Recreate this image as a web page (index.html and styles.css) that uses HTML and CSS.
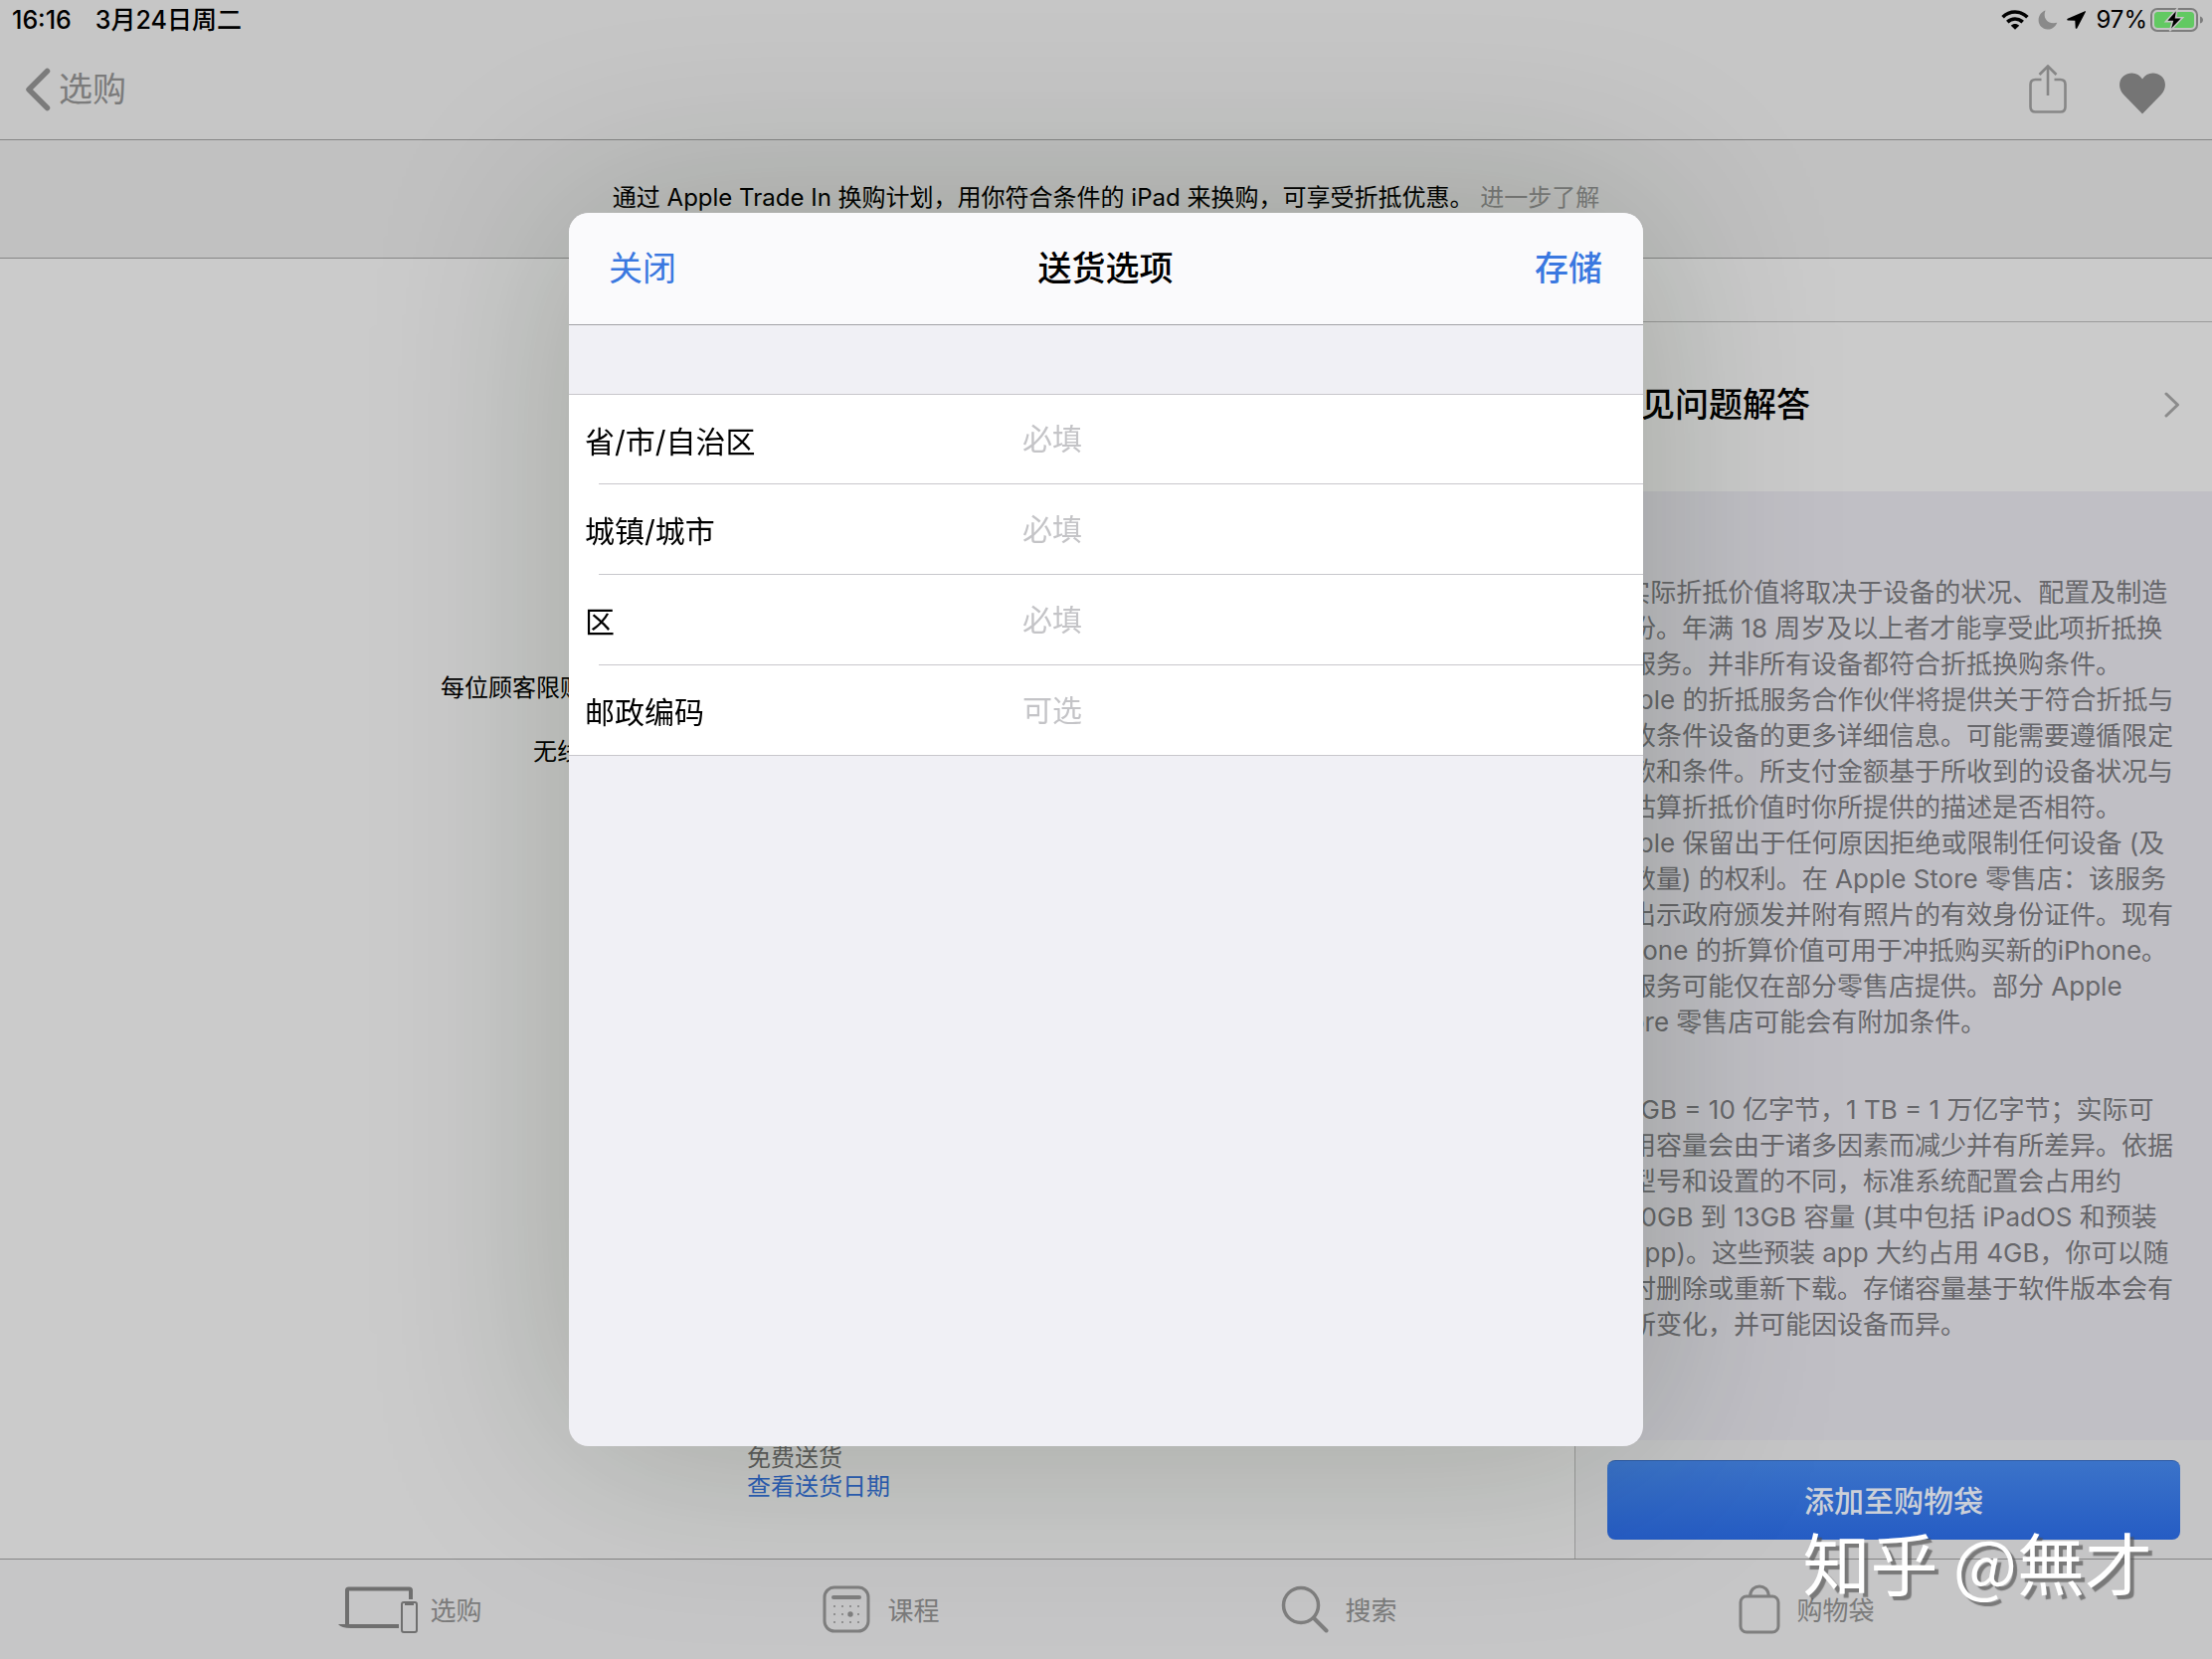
FILE: index.html
```html
<!DOCTYPE html>
<html lang="zh-CN">
<head>
<meta charset="utf-8">
<meta name="viewport" content="width=device-width, initial-scale=1">
<title>送货选项</title>
<link rel="stylesheet" href="styles.css">
</head>
<body>
<div class="page">
  <header class="top">
    <div class="status">
      <div class="status-group status-left"><span>16:16</span><span>3月24日周二</span></div>
      <div class="status-group status-right">
        <svg class="i-wifi" width="28" height="20" viewBox="0 0 28 20" fill="none" stroke="#000" stroke-width="3.6"><path d="M1.6 7.2C8.500 .3 19.500 .3 26.400 7.200"/><path d="M6.300 12.100C10.600 8 17.400 8 21.700 12.100"/><path d="M14 19.800L9.800 15.700C12 13.400 16 13.400 18.200 15.700Z" fill="#000" stroke="none"/></svg>
        <svg class="i-moon" width="20" height="20" viewBox="0 0 20 20"><path d="M7.500 .5C4.500 8 9.500 15 19.300 12.800C17 18 13 19.800 9.600 19.600C4.500 19.300 .6 15.500 .6 10.300C.6 5.500 3.600 1.800 7.500 .5Z" fill="#8a8a8a"/></svg>
        <svg class="i-loc" width="20" height="18" viewBox="0 0 20 18"><path d="M18.200 .3L.8 7.800C-.1 8.300 .1 9.300 1 9.400L8.300 9.700L8.700 17C8.800 18 10 18.200 10.400 17.300L18.900 1C19.200 .4 18.800 0 18.200 .3Z" fill="#000"/></svg>
        <span class="pct">97%</span>
        <svg class="i-bat" width="54" height="24" viewBox="0 0 54 24"><rect x="1" y="1" width="46" height="22" rx="6" fill="none" stroke="#7d7d7d" stroke-width="2"/><rect x="4" y="4" width="40" height="16" rx="3.500" fill="#62c962"/><path d="M27 .8L15.500 13.600H22.200L19.500 23.200L32.500 9.700H25.600Z" fill="#000" stroke="#c6c6c6" stroke-width="1.600"/><path d="M50 8.500C54 9.500 54 14.500 50 15.500Z" fill="#7d7d7d"/></svg>
      </div>
    </div>
    <nav class="navbar">
      <a class="back" href="#shop">
        <svg width="26" height="44" viewBox="0 0 26 44" fill="none" stroke="#7b7b7b" stroke-width="5.500" stroke-linecap="round" stroke-linejoin="round"><path d="M22.500 3.500L4 22L22.500 40.500"/></svg>
        <span>选购</span>
      </a>
      <div class="nav-actions">
        <button class="icon-btn" type="button" aria-label="共享"><svg width="38" height="50" viewBox="0 0 38 50" fill="none" stroke="#868686" stroke-width="2.600"><path d="M12.500 15H6.500Q1.500 15 1.500 20V42.500Q1.500 47.500 6.500 47.500H31.500Q36.500 47.500 36.500 42.500V20Q36.500 15 31.500 15H25.500"/><path d="M19 31V2M10.500 10L19 1.500L27.500 10"/></svg></button>
        <button class="icon-btn" type="button" aria-label="收藏"><svg width="46" height="50" viewBox="0 -8 46 50"><path d="M23 41.500L4 22C-1.500 16-1 7.500 4 3.500C10-1.500 19-.5 23 6.500C27-.5 36-1.500 42 3.500C47 7.500 47.500 16 42 22Z" fill="#757575"/></svg></button>
      </div>
    </nav>
  </header>

  <div class="banner"><p>通过 Apple Trade In 换购计划，用你符合条件的 iPad 来换购，可享受折抵优惠。 <a href="#trade-in">进一步了解</a></p></div>

  <main class="main">
    <section class="product">
      <p class="limit">每位顾客限购</p>
      <p class="wireless">无线</p>
      <div class="shipping">
        <p>免费送货</p>
        <a href="#dates">查看送货日期</a>
      </div>
    </section>
    <aside class="side">
      <div class="spacer"></div>
      <a class="faq" href="#faq">
        <span>常见问题解答</span>
        <svg width="16" height="26" viewBox="0 0 16 26" fill="none" stroke="#8b8b8b" stroke-width="3" stroke-linecap="round" stroke-linejoin="round"><path d="M2 2L13.500 13L2 24"/></svg>
      </a>
      <div class="notes">
        <p>* 实际折抵价值将取决于设备的状况、配置及制造<br>年份。年满 18 周岁及以上者才能享受此项折抵换<br>购服务。并非所有设备都符合折抵换购条件。<br>Apple 的折抵服务合作伙伴将提供关于符合折抵与<br>回收条件设备的更多详细信息。可能需要遵循限定<br>条款和条件。所支付金额基于所收到的设备状况与<br>在估算折抵价值时你所提供的描述是否相符。<br>Apple 保留出于任何原因拒绝或限制任何设备 (及<br>其数量) 的权利。在 Apple Store 零售店：该服务<br>需出示政府颁发并附有照片的有效身份证件。现有<br>iPhone 的折算价值可用于冲抵购买新的iPhone。<br>该服务可能仅在部分零售店提供。部分 Apple<br>Store 零售店可能会有附加条件。</p>
        <p class="hang">1GB = 10 亿字节，1 TB = 1 万亿字节；实际可<br>用容量会由于诸多因素而减少并有所差异。依据<br>型号和设置的不同，标准系统配置会占用约<br>10GB 到 13GB 容量 (其中包括 iPadOS 和预装<br>app)。这些预装 app 大约占用 4GB，你可以随<br>时删除或重新下载。存储容量基于软件版本会有<br>所变化，并可能因设备而异。</p>
      </div>
      <div class="buybar"><button class="buy" type="button">添加至购物袋</button></div>
    </aside>
  </main>

  <nav class="tabs">
    <a class="tab tab-shop" href="#shop"><svg width="81" height="48" viewBox="0 0 81 48" fill="none" stroke="#6f6f6f"><path d="M74 14V5Q74 3.500 72.500 3.500H11.500Q10 3.500 10 5V40" stroke-width="4"/><path d="M1 39H62V43H14Q4 43 1 39Z" fill="#6f6f6f" stroke="none"/><rect x="65" y="17" width="15" height="30" rx="2" stroke-width="2"/><path d="M68 18.500H77" stroke-width="3"/></svg><span>选购</span></a>
    <a class="tab" href="#sessions"><svg width="48" height="48" viewBox="0 0 48 48"><rect x="2" y="2" width="44" height="44" rx="10" fill="none" stroke="#7f7f7f" stroke-width="3"/><path d="M11 12H37" stroke="#7f7f7f" stroke-width="4" stroke-linecap="round"/><g fill="#7f7f7f"><circle cx="12" cy="21" r="1"/><circle cx="20" cy="21" r="1"/><circle cx="28" cy="21" r="1"/><circle cx="36" cy="21" r="1"/><circle cx="12" cy="29" r="1"/><circle cx="20" cy="29" r="1"/><circle cx="28" cy="29" r="2.700"/><circle cx="36" cy="29" r="1"/><circle cx="12" cy="37" r="1"/><circle cx="20" cy="37" r="1"/><circle cx="28" cy="37" r="1"/><circle cx="36" cy="37" r="1"/></g></svg><span>课程</span></a>
    <a class="tab" href="#search"><svg width="48" height="48" viewBox="0 0 48 48" fill="none" stroke="#7f7f7f" stroke-linecap="round"><circle cx="20" cy="20" r="17.500" stroke-width="3.500"/><path d="M33 33L45.500 45.500" stroke-width="4"/></svg><span>搜索</span></a>
    <a class="tab" href="#bag"><svg width="42" height="50" viewBox="0 0 42 50" fill="none" stroke="#7f7f7f" stroke-width="3"><rect x="2" y="12" width="38" height="36" rx="6"/><path d="M11.500 12C12 -1.500 30 -1.500 30.500 12"/></svg><span>购物袋</span></a>
  </nav>
</div>

<div class="overlay">
  <form class="modal" role="dialog" aria-labelledby="modal-title">
    <div class="modal-head">
      <button class="text-btn" type="button">关闭</button>
      <h1 id="modal-title">送货选项</h1>
      <button class="text-btn save" type="button">存储</button>
    </div>
    <div class="fields">
      <div class="row"><label for="province">省/市/自治区</label><input id="province" type="text" placeholder="必填"></div>
      <div class="row"><label for="city">城镇/城市</label><input id="city" type="text" placeholder="必填"></div>
      <div class="row"><label for="district">区</label><input id="district" type="text" placeholder="必填"></div>
      <div class="row"><label for="postcode">邮政编码</label><input id="postcode" type="text" placeholder="可选"></div>
    </div>
  </form>
</div>
<div class="watermark">知乎 @無才</div>
</body>
</html>
```

FILE: styles.css
```css
* { box-sizing: border-box; }

body {
  margin: 0;
  background: #cbcbcb;
  color: #000;
  font-family: "Inter", "Noto Sans CJK SC", sans-serif;
  font-size: 24px;
  line-height: 36px;
}

p, h1 { margin: 0; }
a { color: inherit; text-decoration: none; }
button { border: 0; padding: 0; background: none; font: inherit; color: inherit; }
svg { display: block; flex: none; }

.page { display: flex; flex-direction: column; min-height: 100vh; }

.top { background: #c6c6c6; border-bottom: 1px solid #868686; }

.status {
  display: flex;
  justify-content: space-between;
  height: 40px;
  padding: 0 8px 0 12px;
  line-height: 40px;
  font-weight: 500;
}
.status-group { display: flex; align-items: center; }
.status-left { gap: 24px; font-size: 25px; }
.status-right { gap: 9px; }
.pct { font-weight: 400; }
.i-bat { margin-left: -6px; }

.navbar {
  display: flex;
  align-items: center;
  justify-content: space-between;
  height: 100px;
  padding: 0 47px 0 25px;
}
.back { display: flex; align-items: center; gap: 8px; color: #7b7b7b; font-size: 34px; line-height: 40px; }
.nav-actions { display: flex; align-items: center; gap: 53px; }

.banner {
  display: flex;
  align-items: center;
  justify-content: center;
  height: 119px;
  padding-bottom: 2px;
  background: #c1c1c1;
  border-bottom: 1px solid #868686;
  white-space: nowrap;
}
.banner a { color: #7b7b7b; }

.main { display: grid; grid-template-columns: minmax(0, 1fr) 641px; flex: 1; }

.product { display: flex; flex-direction: column; padding: 414px 0 58px; }
.limit { padding-left: 443px; }
.wireless { padding-left: 536px; margin-top: 28px; }
.shipping { margin-top: auto; padding-left: 751px; line-height: 29px; color: #5f5f5f; }
.shipping a { color: #2b5fb8; }

.side { display: flex; flex-direction: column; border-left: 1px solid #9a9a9a; }
.spacer { height: 64px; border-bottom: 1px solid #9a9a9a; }
.faq {
  display: flex;
  align-items: center;
  justify-content: space-between;
  height: 170px;
  padding: 0 32px 4px;
  font-size: 34px;
  font-weight: 500;
}
.notes {
  flex: 1;
  display: flex;
  flex-direction: column;
  gap: 52px;
  padding: 84px 0 84px 29px;
  background: #c0bfc5;
  color: #67676b;
  font-size: 26px;
  line-height: 36px;
  white-space: nowrap;
}
.hang { padding-left: 26px; }
.buybar { padding: 20px 32px 19px; background: #c5c5c6; }
.buy {
  width: 100%;
  height: 80px;
  border-top: 1px solid #2f5ca6;
  border-radius: 8px;
  background: linear-gradient(#3b73c9, #255cc4);
  color: #ccd0d8;
  font-size: 30px;
  font-weight: 500;
}

.tabs {
  display: flex;
  align-items: center;
  justify-content: center;
  gap: 343px;
  height: 101px;
  border-top: 1px solid #868686;
  background: #c6c6c7;
  color: #7b7b7b;
  font-size: 26px;
}
.tab { display: flex; align-items: center; gap: 17px; }
.tab span { padding-top: 4px; }
.tab-shop { gap: 12px; }

.overlay {
  position: fixed;
  inset: 0;
  display: flex;
  align-items: center;
  justify-content: center;
}
.modal {
  display: flex;
  flex-direction: column;
  width: 1080px;
  height: 1240px;
  max-width: 100%;
  max-height: 100%;
  overflow: hidden;
  border-radius: 20px;
  background: #f0f0f5;
  box-shadow: 0 0 200px rgba(12, 32, 0, 0.22);
}
.modal-head {
  display: flex;
  align-items: center;
  justify-content: space-between;
  height: 113px;
  padding: 0 41px 0 40px;
  background: #fafafc;
  border-bottom: 1px solid #a2a2a6;
  font-size: 34px;
}
h1 { font-size: 34px; font-weight: 500; }
.text-btn { color: #3a78e0; }
.save { font-weight: 500; }

.fields { margin-top: 69px; background: #fff; font-size: 30px; }
.row { display: flex; align-items: center; height: 91px; padding-left: 16px; position: relative; }
.row:first-child { border-top: 1px solid #c8c7cc; }
.row::after {
  content: "";
  position: absolute;
  bottom: 0;
  left: 30px;
  right: 0;
  height: 1px;
  background: #c8c7cc;
}
.row:last-child::after { left: 0; }
.row label { width: 440px; padding-top: 3px; }
.row input {
  flex: 1;
  min-width: 0;
  height: 80px;
  border: 0;
  padding: 0 0 2px;
  background: none;
  font: inherit;
  outline: none;
}
.row input::placeholder { color: #c4c4c7; opacity: 1; }

.watermark {
  position: fixed;
  right: 60px;
  bottom: 58px;
  color: #fff;
  font-family: "Noto Sans CJK SC", sans-serif;
  font-size: 68px;
  line-height: 80px;
  text-shadow: 4px 4px 1px rgba(80, 80, 80, 0.65);
}
```
